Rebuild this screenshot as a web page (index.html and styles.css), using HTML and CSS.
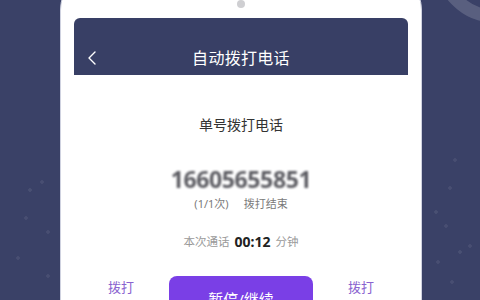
FILE: index.html
```html
<!DOCTYPE html>
<html lang="zh-CN">

<head>
    <meta charset="UTF-8">
    <meta name="viewport" content="width=device-width, initial-scale=1.0">
    <title>自动拨打电话</title>
    <link rel="stylesheet" href="styles.css">
</head>

<body>

    <div class="ring"></div>

    <div class="phone">
        <div class="camera"></div>

        <div class="header">
            <div class="nav">
                <svg class="back" width="8" height="14" viewBox="0 0 8 14">
                    <polyline points="7,1 1,7 7,13" fill="none" stroke="#ffffff" stroke-width="1.4" stroke-linecap="round" stroke-linejoin="round"/>
                </svg>
                <span class="title">自动拨打电话</span>
            </div>
        </div>

        <div class="content">
            <div class="mode">单号拨打电话</div>
            <div class="number">16605655851</div>
            <div class="status">
                <span>(1/1次)</span>
                <span>拨打结束</span>
            </div>
            <div class="duration">
                <span class="muted">本次通话</span>
                <span class="time">00:12</span>
                <span class="muted">分钟</span>
            </div>
            <div class="actions">
                <span class="side">拨打</span>
                <button class="main-btn">暂停/继续</button>
                <span class="side">拨打</span>
            </div>
        </div>
    </div>

</body>

</html>
```

FILE: styles.css
```css
html,
body {
    height: 100%;
}

body {
    margin: 0;
    padding: 0;
    overflow: hidden;
    font-family: 'Noto Sans', 'Noto Sans CJK SC', sans-serif;
    background-color: #3a4167;
    background-image:
        radial-gradient(circle at 30px 190px, rgba(255, 255, 255, 0.08) 1.5px, transparent 2px),
        radial-gradient(circle at 42px 182px, rgba(255, 255, 255, 0.07) 1.5px, transparent 2px),
        radial-gradient(circle at 26px 218px, rgba(255, 255, 255, 0.07) 1.5px, transparent 2px),
        radial-gradient(circle at 48px 232px, rgba(255, 255, 255, 0.07) 1.5px, transparent 2px),
        radial-gradient(circle at 18px 258px, rgba(255, 255, 255, 0.07) 1.5px, transparent 2px),
        radial-gradient(circle at 48px 276px, rgba(255, 255, 255, 0.07) 1.5px, transparent 2px),
        radial-gradient(circle at 455px 160px, rgba(255, 255, 255, 0.07) 1.5px, transparent 2px),
        radial-gradient(circle at 450px 188px, rgba(255, 255, 255, 0.07) 1.5px, transparent 2px),
        radial-gradient(circle at 436px 212px, rgba(255, 255, 255, 0.08) 1.5px, transparent 2px),
        radial-gradient(circle at 446px 226px, rgba(255, 255, 255, 0.07) 1.5px, transparent 2px),
        radial-gradient(circle at 460px 252px, rgba(255, 255, 255, 0.08) 1.5px, transparent 2px),
        radial-gradient(circle at 470px 246px, rgba(255, 255, 255, 0.07) 1.5px, transparent 2px),
        radial-gradient(circle at 438px 262px, rgba(255, 255, 255, 0.07) 1.5px, transparent 2px),
        radial-gradient(circle at 452px 282px, rgba(255, 255, 255, 0.07) 1.5px, transparent 2px);
}

.ring {
    position: absolute;
    left: 434px;
    top: -101px;
    width: 98px;
    height: 98px;
    border: 13px solid rgba(255, 255, 255, 0.16);
    border-radius: 50%;
}

.phone {
    position: relative;
    width: 334px;
    height: 360px;
    margin: -30px 0 0 60px;
    padding: 29px 13px 0;
    background-color: #ffffff;
    border: 1px solid #cfd2e0;
    border-radius: 40px 40px 0 0;
    box-sizing: content-box;
}

.camera {
    width: 8px;
    height: 8px;
    margin: 0 auto 10px;
    border-radius: 50%;
    background-color: #cfcfd2;
}

.header {
    height: 57px;
    padding-top: 22px;
    box-sizing: border-box;
    background-color: #383f65;
    border-radius: 6px 6px 0 0;
}

.nav {
    position: relative;
    height: 35px;
    display: flex;
    align-items: center;
    justify-content: center;
}

.back {
    position: absolute;
    left: 14px;
    top: 11px;
}

.title {
    color: #ffffff;
    font-size: 16px;
    line-height: 20px;
    letter-spacing: 0.3px;
}

.content {
    display: flex;
    flex-direction: column;
    align-items: center;
}

.mode {
    margin-top: 40px;
    font-size: 14px;
    line-height: 20px;
    color: #333333;
}

.number {
    margin-top: 29px;
    font-size: 23px;
    line-height: 30px;
    font-weight: bold;
    letter-spacing: -0.4px;
    color: #5c5c62;
    filter: blur(0.8px);
}

.status {
    margin-top: 2px;
    display: flex;
    gap: 15px;
    font-size: 11px;
    line-height: 16px;
    color: #7a7a7a;
}

.duration {
    margin-top: 20px;
    display: flex;
    align-items: center;
    gap: 4px;
    line-height: 20px;
}

.muted {
    font-size: 11.5px;
    color: #9a9a9a;
}

.time {
    font-size: 14px;
    font-weight: bold;
    color: #222222;
    padding: 0 1px;
}

.actions {
    margin-top: 24px;
    display: flex;
    align-items: flex-start;
    gap: 35px;
}

.side {
    margin-top: 3px;
    font-size: 13px;
    line-height: 16px;
    color: #8a63cf;
}

.main-btn {
    width: 144px;
    height: 44px;
    border: none;
    border-radius: 8px;
    background-color: #7a3fe6;
    color: #ffffff;
    font-family: 'Noto Sans', 'Noto Sans CJK SC', sans-serif;
    font-size: 15px;
    padding: 0;
}
```
